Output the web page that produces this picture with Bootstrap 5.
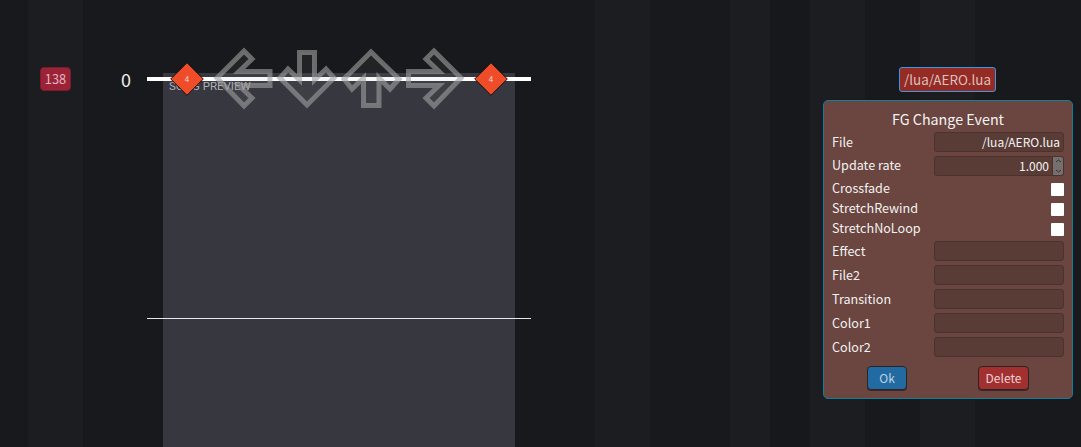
<!DOCTYPE html>
<html lang="en">
<head>
<meta charset="utf-8">
<title>FG Change Event</title>
<link href="https://cdn.jsdelivr.net/npm/bootstrap@5.3.0/dist/css/bootstrap.min.css" rel="stylesheet">
<style>
html, body { height: 100%; }
body {
  margin: 0; overflow: hidden; color: #f2f2f2;
  font-family: "Noto Sans CJK JP", "Noto Sans", sans-serif; font-size: 13px;
  background: linear-gradient(90deg, #18191c 0 28px, #1c1d21 28px 83px, #18191c 83px 595px, #1c1d21 595px 650px, #18191c 650px 730px, #1c1d21 730px 770px, #17181b 770px 810px, #1c1d21 810px 865px, #18191c 865px 920px, #1c1d21 920px 975px, #18191c 975px);
}
.stage { height: 447px; }
.left-gutter { width: 147px; padding-top: 67px; padding-left: 40px; }
.measure-tag { width: 31px; height: 24px; background: #9c2238; border: 1px solid #7c1b2d; border-radius: 4px; color: #e0b6bf; font-size: 12.8px; line-height: 21px; text-align: center; }
.beat-num { width: 60px; text-align: right; font-size: 18px; line-height: 26px; color: #eee; margin-top: -1px; }
.track { width: 384px; height: 447px; position: relative; }
.preview { position: absolute; left: 16px; right: 16px; top: 73px; bottom: 0; background: #373740; }
.preview-label { position: absolute; left: 6px; top: 5px; font-family: Roboto, sans-serif; font-size: 11.5px; color: #b0b0b4; line-height: 16px; }
.beat-thick { position: absolute; left: 0; right: 0; top: 77px; height: 4px; background: #fff; }
.beat-thin { position: absolute; left: 0; right: 0; top: 318px; height: 1px; background: #e8e8ea; }
.arrows { position: absolute; left: 0; top: 0; width: 384px; height: 120px; }
.mine { position: absolute; top: 62px; width: 34px; height: 34px; }
.mine span { position: absolute; inset: 0; text-align: center; line-height: 34px; font-size: 8px; color: #f6d8cf; }
.side { margin-left: 292px; width: 250px; padding-top: 67px; }
.file-tag { width: 97px; height: 25px; margin-left: 76px; background: #942b25; border: 1px solid #3d97e0; border-radius: 3px; color: #dcc0bc; font-size: 13.4px; line-height: 22px; text-align: center; }
.event-panel { margin-top: 8px; height: 299px; background: #6b453f; border: 1px solid #137d9c; border-radius: 5px; padding: 0 8px; }
.event-title { font-size: 14.3px; line-height: 20px; text-align: center; padding-top: 8px; height: 29px; color: #f4f4f4; margin-bottom: 0; }
.field-row { height: 24px; }
.field-row.tight { height: 20px; }
.field-row.first-tight { margin-top: 1px; }
.field-name { width: 102px; font-size: 12.6px; color: #f2f2f2; }
.tight .field-name, .lift-name .field-name { margin-top: -1px; }
.field-box { width: 130px; height: 20px; background: #5a3c37; border: 1px solid #4c322e; border-radius: 3px; color: #f4f4f4; font-size: 12px; line-height: 18px; text-align: right; padding-right: 3px; }
.spinner { width: 130px; height: 20px; }
.spinner .field-box { width: 119px; border-radius: 3px 0 0 3px; }
.spin-btns { width: 11px; height: 20px; background: #75706d; border: 1px solid #4c322e; border-left: 0; border-radius: 0 3px 3px 0; }
.tick { width: 13px; height: 13px; background: #fff; border-radius: 1px; margin-left: auto; }
.panel-actions { padding-top: 7px; }
.act { height: 24px; border: 1px solid #2a2422; border-radius: 4px; font-size: 12px; line-height: 20px; text-align: center; padding: 0 0 1px; box-shadow: 0 1px 0 #3a2a28; }
.act-ok { width: 40px; margin-left: 35px; background: #226ba2; color: #bcd2e2; }
.act-del { width: 51px; margin-left: 71px; background: #a23030; color: #efd0d0; }
</style>
</head>
<body>
<div class="stage d-flex">
  <div class="left-gutter d-flex align-items-start">
    <div class="measure-tag">138</div>
    <div class="beat-num">0</div>
  </div>
  <div class="track">
    <div class="preview"><div class="preview-label">SONG PREVIEW</div></div>
    <div class="beat-thick"></div>
    <div class="beat-thin"></div>
    <svg class="arrows" viewBox="147 0 384 120" fill="rgba(159,159,159,.08)" stroke="rgba(159,159,159,.61)" stroke-width="5" stroke-linejoin="miter">
      <path d="M217 78 244 51 252 59 239 71.5H270V85.5H239L252 98 244 106Z"/>
      <path d="M299.5 52.5H314.5V80L326 69 334 78 307 105 280 78 288 69 299.5 80Z"/>
      <path d="M371 52 399 79 390 89 379 78V105.500H363.500V78L352 89 344 79Z"/>
      <path d="M461 78 434 51 426 59 439 71.500H408.500V85.500H439L426 98 434 106Z"/>
    </svg>
    <div class="mine" style="left:23px"><svg width="34" height="34" viewBox="0 0 34 34"><path d="M17 .7 33.3 17 17 33.3 .7 17Z" fill="#ef4c29" stroke="#111" stroke-width="1"/></svg><span>4</span></div>
    <div class="mine" style="left:327px"><svg width="34" height="34" viewBox="0 0 34 34"><path d="M17 .7 33.3 17 17 33.3 .7 17Z" fill="#ef4c29" stroke="#111" stroke-width="1"/></svg><span>4</span></div>
  </div>
  <div class="side">
    <div class="file-tag">/lua/AERO.lua</div>
    <div class="event-panel">
      <div class="event-title">FG Change Event</div>
      <div class="field-row d-flex align-items-center"><div class="field-name">File</div><div class="field-box">/lua/AERO.lua</div></div>
      <div class="field-row lift-name d-flex align-items-center"><div class="field-name">Update rate</div><div class="spinner d-flex"><div class="field-box">1.000</div><div class="spin-btns d-flex flex-column align-items-center justify-content-between"><svg width="7" height="7" viewBox="0 0 7 7"><path d="M1 5 3.5 3 6 5" fill="none" stroke="#333" stroke-width="1"/></svg><svg width="7" height="7" viewBox="0 0 7 7"><path d="M1 2 3.5 4 6 2" fill="none" stroke="#333" stroke-width="1"/></svg></div></div></div>
      <div class="field-row tight first-tight d-flex align-items-center"><div class="field-name">Crossfade</div><div class="tick"></div></div>
      <div class="field-row tight d-flex align-items-center"><div class="field-name">StretchRewind</div><div class="tick"></div></div>
      <div class="field-row tight d-flex align-items-center"><div class="field-name">StretchNoLoop</div><div class="tick"></div></div>
      <div class="field-row d-flex align-items-center"><div class="field-name">Effect</div><div class="field-box"></div></div>
      <div class="field-row d-flex align-items-center"><div class="field-name">File2</div><div class="field-box"></div></div>
      <div class="field-row d-flex align-items-center"><div class="field-name">Transition</div><div class="field-box"></div></div>
      <div class="field-row d-flex align-items-center"><div class="field-name">Color1</div><div class="field-box"></div></div>
      <div class="field-row d-flex align-items-center"><div class="field-name">Color2</div><div class="field-box"></div></div>
      <div class="panel-actions d-flex">
        <button class="act act-ok" type="button">Ok</button>
        <button class="act act-del" type="button">Delete</button>
      </div>
    </div>
  </div>
</div>
<script src="https://cdn.jsdelivr.net/npm/bootstrap@5.3.0/dist/js/bootstrap.bundle.min.js"></script>
</body>
</html>
